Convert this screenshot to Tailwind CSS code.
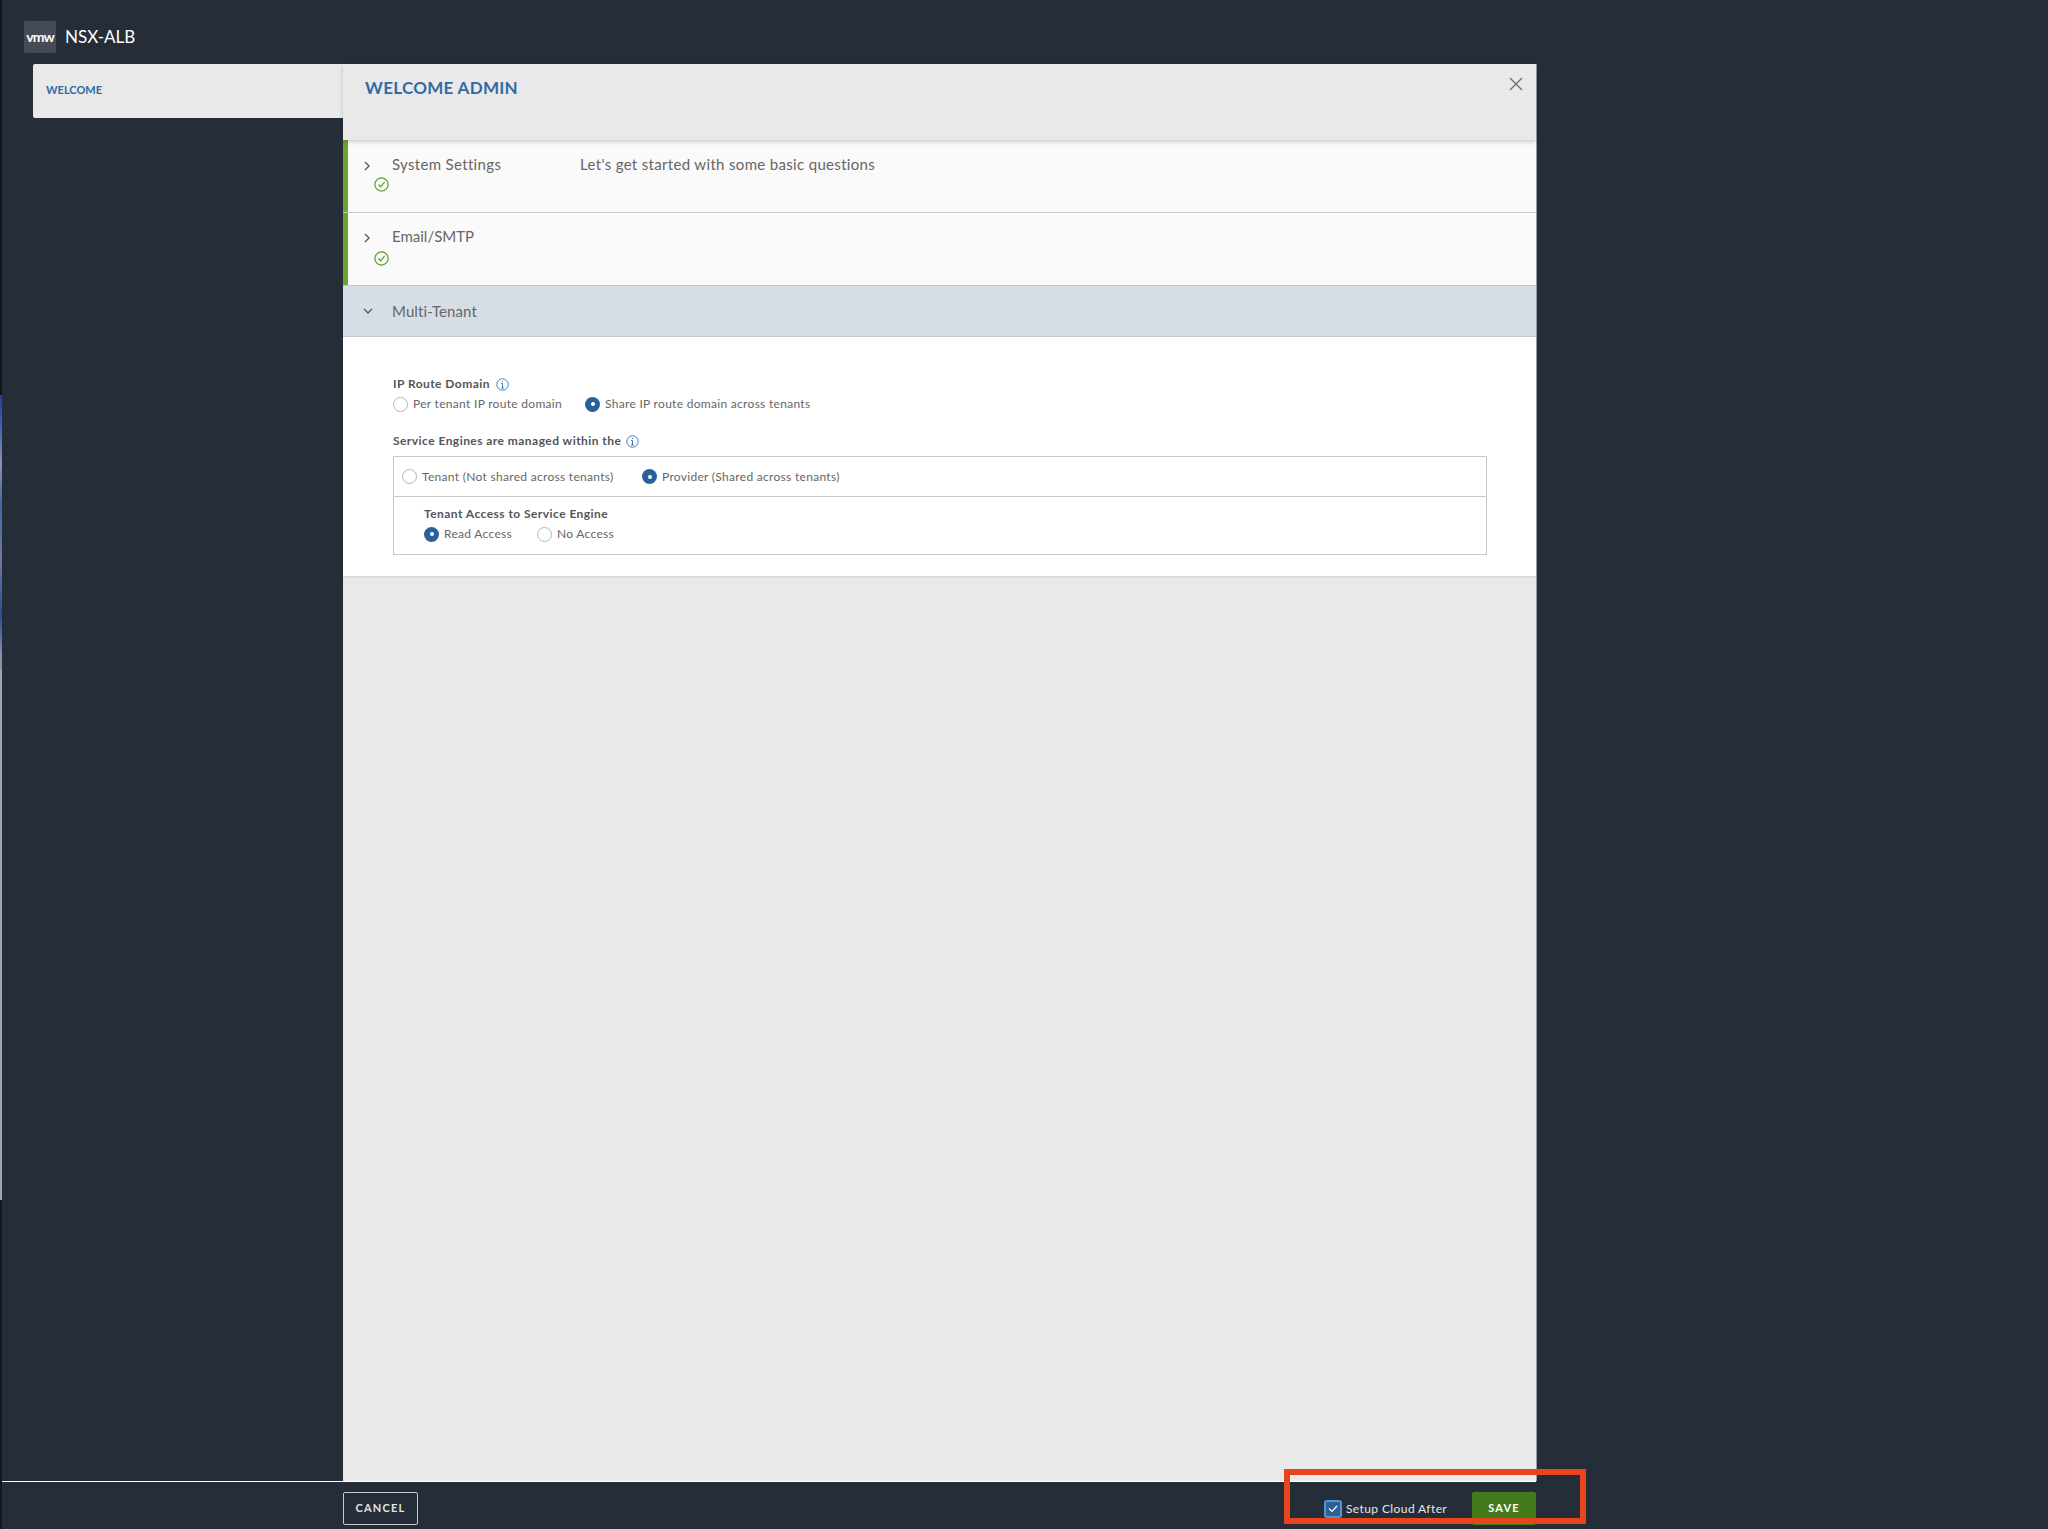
<!DOCTYPE html>
<html lang="en">
<head>
    <meta charset="UTF-8">
    <meta name="viewport" content="width=device-width, initial-scale=1.0">
    <title>NSX-ALB Welcome</title>
    <script src="https://cdn.jsdelivr.net/npm/@tailwindcss/browser@4"></script>
</head>
<body class="bg-[#252d38] font-['Lato','Open_Sans',sans-serif] overflow-hidden">
<div class="relative flex h-[1529px] w-[2048px]">

    <!-- thin strip of the window behind -->
    <div class="flex w-[2px] shrink-0 flex-col">
        <div class="h-[395px] bg-[#14161c]"></div>
        <div class="h-[275px] bg-[linear-gradient(180deg,#1d3fa8_0%,#3b5cb0_10%,#8b93b5_25%,#4a63a0_40%,#6d7ca6_60%,#2f4a8f_80%,#8c93ab_95%)]"></div>
        <div class="h-[530px] bg-[#a3a5a8]"></div>
        <div class="flex-1 bg-[#10172a]"></div>
    </div>

    <div class="flex w-[2046px] flex-col">
        <!-- top bar -->
        <div class="flex h-[64px] items-start pl-[22px] pt-[21px]">
            <div class="flex h-[32px] w-[32px] items-center justify-center rounded-[1px] bg-[#444b54] text-[14px] font-bold leading-none tracking-[-1px] text-white">vmw</div>
            <span class="ml-[9px] mt-[6px] text-[17px] leading-[20px] text-white">NSX-ALB</span>
        </div>

        <div class="flex h-[1417px]">
            <!-- left nav -->
            <div class="w-[341px] shrink-0 pl-[31px]">
                <div class="flex h-[54px] w-[310px] items-center rounded-l-[2px] bg-[#e9e9e9] pb-[1px] pl-[13px] text-[11px] font-bold text-[#2f6ba5]">WELCOME</div>
            </div>

            <!-- panel -->
            <div class="flex w-[1194px] flex-col border-r border-[#9a9ea3] bg-[#e9e9e9]">
                <div class="relative z-10 flex h-[76px] shrink-0 items-start justify-between bg-[#e9e9e9] pl-[22px] pr-[13px] pt-[13px] shadow-[0_2px_4px_rgba(0,0,0,0.18)]">
                    <h1 class="text-[17px] font-bold leading-[22px] tracking-[0.3px] text-[#2f6ba5]">WELCOME ADMIN</h1>
                    <svg class="h-[14px] w-[14px]" viewBox="0 0 14 14" fill="none" stroke="#6e6e6e" stroke-width="1.3"><path d="M1 1l12 12M13 1L1 13"/></svg>
                </div>

                <!-- System Settings -->
                <div class="flex h-[73px] shrink-0 border-b border-[#c6c9cc] bg-[#fafafa]">
                    <div class="w-[5px] bg-[#69a42f]"></div>
                    <div class="w-[16px]"></div>
                    <div class="w-[23px] pt-[16px]">
                        <svg class="mt-[5px] h-[10px] w-[7px]" viewBox="0 0 7 10" fill="none" stroke="#555" stroke-width="1.3"><path d="M1 1l4 4-4 4"/></svg>
                        <svg class="ml-[10px] mt-[6px] h-[15px] w-[15px]" viewBox="0 0 15 15" fill="none" stroke="#5c9a2b" stroke-width="1.2"><circle cx="7.5" cy="7.5" r="6.6"/><path d="M4.5 7.5l2.2 2.4 4-5"/></svg>
                    </div>
                    <div class="w-[187px] pl-[5px] pt-[14px] text-[15px] leading-[20px] tracking-[0.33px] text-[#666]">System Settings</div>
                    <div class="pl-[6px] pt-[14px] text-[15px] leading-[20px] tracking-[0.33px] text-[#666]">Let's get started with some basic questions</div>
                </div>

                <!-- Email/SMTP -->
                <div class="flex h-[73px] shrink-0 border-b border-[#c6c9cc] bg-[#fafafa]">
                    <div class="w-[5px] bg-[#69a42f]"></div>
                    <div class="w-[16px]"></div>
                    <div class="w-[23px] pt-[15px]">
                        <svg class="mt-[5px] h-[10px] w-[7px]" viewBox="0 0 7 10" fill="none" stroke="#555" stroke-width="1.3"><path d="M1 1l4 4-4 4"/></svg>
                        <svg class="ml-[10px] mt-[8px] h-[15px] w-[15px]" viewBox="0 0 15 15" fill="none" stroke="#5c9a2b" stroke-width="1.2"><circle cx="7.5" cy="7.5" r="6.6"/><path d="M4.5 7.5l2.2 2.4 4-5"/></svg>
                    </div>
                    <div class="pl-[5px] pt-[13px] text-[15px] leading-[20px] text-[#666]">Email/SMTP</div>
                </div>

                <!-- Multi-Tenant -->
                <div class="flex h-[51px] shrink-0 items-center border-b border-[#c6c9cc] bg-[#d6dde5] pl-[20px]">
                    <svg class="h-[7px] w-[10px]" viewBox="0 0 10 7" fill="none" stroke="#555" stroke-width="1.3"><path d="M1 1l4 4 4-4"/></svg>
                    <span class="ml-[19px] text-[15px] leading-[20px] tracking-[0.1px] text-[#666]">Multi-Tenant</span>
                </div>

                <div class="h-[241px] shrink-0 border-b-2 border-[#dcdcdc] bg-white pl-[50px] pt-[39px] text-[12px] tracking-[0.3px] text-[#666]">
                    <div class="flex h-[16px] items-center gap-[6px] font-bold tracking-[0.45px] text-[#555]">
                        IP Route Domain
                        <svg class="h-[13px] w-[13px]" viewBox="0 0 13 13" fill="none" stroke="#3c7fc0"><circle cx="6.5" cy="6.5" r="5.7"/><path d="M6.5 5.5v4.5M5 5.5h1.5M5 10h3M6.5 3v1"/></svg>
                    </div>
                    <div class="mt-[4px] flex h-[16px] items-center">
                        <span class="h-[15px] w-[15px] rounded-full border border-[#b5b5b5] bg-white"></span>
                        <span class="ml-[5px] w-[172px]">Per tenant IP route domain</span>
                        <span class="flex h-[15px] w-[15px] items-center justify-center rounded-full bg-[#2a6297]"><span class="h-[4px] w-[4px] rounded-full bg-white"></span></span>
                        <span class="ml-[5px]">Share IP route domain across tenants</span>
                    </div>
                    <div class="mt-[21px] flex h-[16px] items-center gap-[5px] font-bold tracking-[0.45px] text-[#555]">
                        Service Engines are managed within the
                        <svg class="h-[13px] w-[13px]" viewBox="0 0 13 13" fill="none" stroke="#3c7fc0"><circle cx="6.5" cy="6.5" r="5.7"/><path d="M6.5 5.5v4.5M5 5.5h1.5M5 10h3M6.5 3v1"/></svg>
                    </div>
                    <div class="mt-[7px] h-[99px] w-[1094px] border border-[#c9c9c9]">
                        <div class="flex h-[40px] items-center border-b border-[#c9c9c9] pl-[8px]">
                            <span class="h-[15px] w-[15px] rounded-full border border-[#b5b5b5] bg-white"></span>
                            <span class="ml-[5px] w-[220px]">Tenant (Not shared across tenants)</span>
                            <span class="flex h-[15px] w-[15px] items-center justify-center rounded-full bg-[#2a6297]"><span class="h-[4px] w-[4px] rounded-full bg-white"></span></span>
                            <span class="ml-[5px]">Provider (Shared across tenants)</span>
                        </div>
                        <div class="pl-[30px] pt-[9px]">
                            <div class="h-[16px] font-bold leading-[16px] tracking-[0.45px] text-[#555]">Tenant Access to Service Engine</div>
                            <div class="mt-[4px] flex h-[16px] items-center">
                                <span class="flex h-[15px] w-[15px] items-center justify-center rounded-full bg-[#2a6297]"><span class="h-[4px] w-[4px] rounded-full bg-white"></span></span>
                                <span class="ml-[5px] w-[93px]">Read Access</span>
                                <span class="h-[15px] w-[15px] rounded-full border border-[#b5b5b5] bg-white"></span>
                                <span class="ml-[5px]">No Access</span>
                            </div>
                        </div>
                    </div>
                </div>

                <div class="flex-1"></div>
            </div>
        </div>

        <!-- footer -->
        <div class="relative flex h-[48px] w-[1534px] border-t border-white pl-[341px] pt-[10px]">
            <button class="h-[33px] w-[75px] rounded-[2px] border border-[#c9c9c9] text-[11px] font-bold tracking-[1.2px] text-[#e2e2e2]">CANCEL</button>
            <div class="ml-auto flex h-[33px] items-center">
                <span class="flex h-[18px] w-[18px] items-center justify-center rounded-[3px] border-2 border-[#5a93c8] bg-[#2a6297]">
                    <svg class="h-[8px] w-[10px]" viewBox="0 0 10 8" fill="none" stroke="#fff" stroke-width="1.2"><path d="M1 3.5l3 3 5-5.5"/></svg>
                </span>
                <span class="ml-[4px] w-[126px] text-[12px] tracking-[0.4px] text-[#e6e6e6]">Setup Cloud After</span>
                <button class="h-[33px] w-[64px] rounded-[2px] bg-[#437a1c] text-[11px] font-bold tracking-[1.2px] text-white">SAVE</button>
            </div>
        </div>
    </div>

    <!-- red annotation round the footer actions -->
    <div class="absolute left-[1284px] top-[1469px] h-[55px] w-[302px] border-[6px] border-[#e8451f]"></div>
</div>
</body>
</html>
